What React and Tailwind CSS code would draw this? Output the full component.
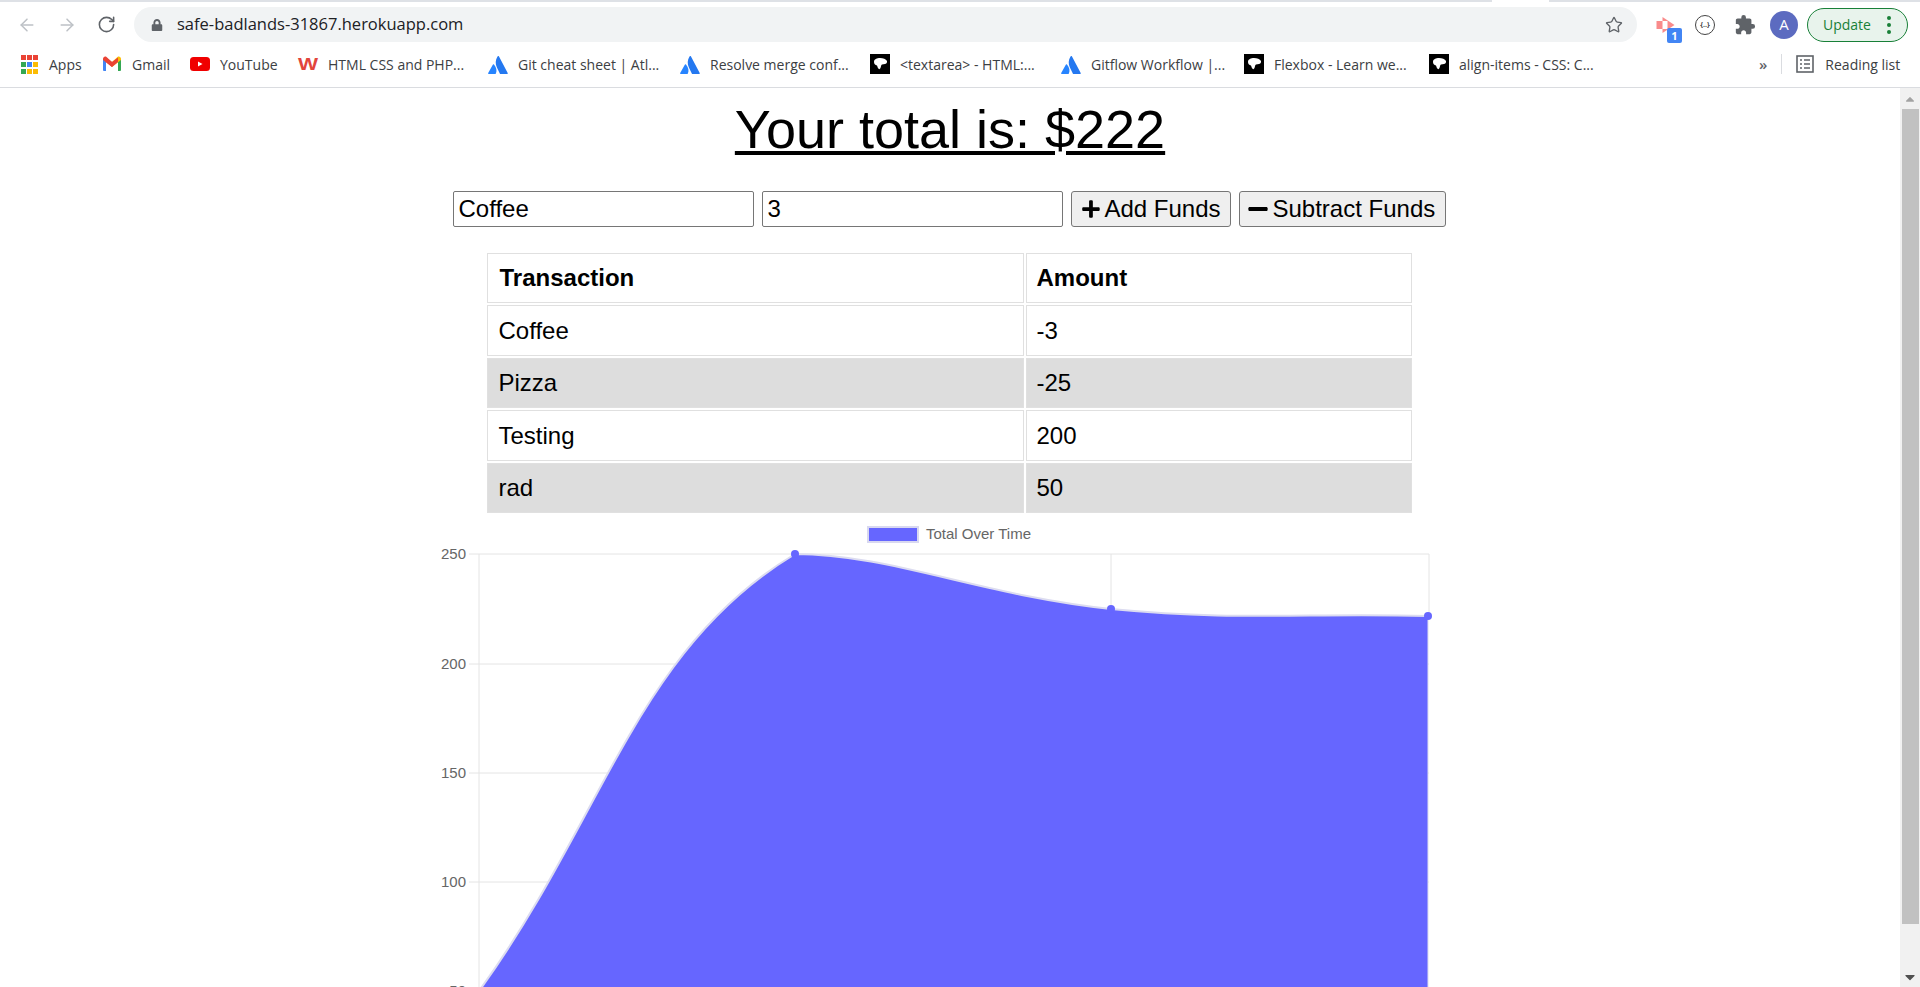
import { ArrowLeft, ArrowRight, RotateCw, Star } from "lucide-react";
import { FaLock, FaPlus, FaMinus, FaCaretUp, FaCaretDown } from "react-icons/fa";
import { MdExtension } from "react-icons/md";

function AppsIcon() {
  const colors = ["#ea4335", "#ea4335", "#ea4335", "#34a853", "#4285f4", "#fbbc04", "#34a853", "#fbbc04", "#fbbc04"];
  return (
    <div className="grid grid-cols-3 gap-[2px] w-[17px]">
      {colors.map((c, i) => (
        <svg key={i} width="5" height="5"><rect width="5" height="5" fill={c} /></svg>
      ))}
    </div>
  );
}

function GmailIcon() {
  return (
    <svg width="20" height="16" viewBox="0 0 20 16">
      <path d="M1 15V3l3 2v10H2a1 1 0 0 1-1-1z" fill="#4285f4" />
      <path d="M19 15V3l-3 2v10h2a1 1 0 0 0 1-1z" fill="#34a853" />
      <path d="M1 3c0-2 2-3 3.500-2L10 6v5L1 4z" fill="#ea4335" />
      <path d="M19 3c0-2-2-3-3.500-2L10 6v5l9-7z" fill="#fbbc04" />
      <path d="M4 1.500 10 6l6-4.500V6l-6 5-6-5z" fill="#ea4335" />
    </svg>
  );
}

function YoutubeIcon() {
  return (
    <svg width="20" height="14" viewBox="0 0 20 14">
      <rect width="20" height="14" rx="3.500" fill="#f00000" />
      <path d="M8 4.500v5L12.500 7z" fill="#fff" />
    </svg>
  );
}

function AtlassianIcon() {
  return (
    <svg width="20" height="19" viewBox="0 0 20 19">
      <path d="M6 9.500c-.4-.5-.9-.4-1.200.2L.2 18c-.2.500.1 1 .6 1h6.500c.3 0 .5-.1.600-.4 1.300-2.900.5-6.300-1.900-9.100z" fill="#2684ff" />
      <path d="M9.500 1.500c-2.200 3.700-2.300 7.600-.6 11l2.900 5.900c.1.300.4.600.7.600h6.600c.5 0 .8-.5.600-1L11 1.400c-.4-.7-1.200-.6-1.500.1z" fill="#2478f0" />
    </svg>
  );
}

function MdnIcon() {
  return (
    <svg width="20" height="20" viewBox="0 0 20 20">
      <rect width="20" height="20" fill="#000" />
      <path d="M4 8c0-3 3-4 6-4 3 0 6 1 7 3 .4 2-1 3-2 3l-3 .5c-1 .5-1 2-1.500 3.500-.5 1-1 1.500-1.500 1-1-.5-1.500-2-2-3.500C5 11 4 10 4 8z" fill="#fff" />
    </svg>
  );
}

function ReadingListIcon() {
  return (
    <svg width="18" height="18" viewBox="0 0 18 18" fill="none" stroke="#5f6368">
      <rect x="1" y="1" width="16" height="16" strokeWidth="1.600" />
      <path d="M4 5h2M8 5h6M4 9h2M8 9h6M4 13h2M8 13h6" strokeWidth="1.600" />
    </svg>
  );
}

const bookmarks = [
  { label: "Apps", icon: <AppsIcon />, width: "w-[83px]" },
  { label: "Gmail", icon: <GmailIcon />, width: "w-[88px]" },
  { label: "YouTube", icon: <YoutubeIcon />, width: "w-[108px]" },
  { label: "HTML CSS and PHP...", icon: <span className="font-['Liberation_Sans'] font-black text-[17px] leading-none text-[#e2453c] scale-x-125">W</span>, width: "w-[190px]" },
  { label: "Git cheat sheet | Atl...", icon: <AtlassianIcon />, width: "w-[192px]" },
  { label: "Resolve merge conf...", icon: <AtlassianIcon />, width: "w-[190px]" },
  { label: "<textarea> - HTML:...", icon: <MdnIcon />, width: "w-[191px]" },
  { label: "Gitflow Workflow |...", icon: <AtlassianIcon />, width: "w-[183px]" },
  { label: "Flexbox - Learn we...", icon: <MdnIcon />, width: "w-[185px]" },
  { label: "align-items - CSS: C...", icon: <MdnIcon />, width: "w-[190px]" },
];

function BrowserBar() {
  return (
    <div className="bg-white border-b border-[#dadce0] font-['Open_Sans',sans-serif]">
      <div className="flex h-[2px] bg-[#dee1e6]">
        <div className="w-[1492px]" />
        <div className="w-[57px] bg-white" />
      </div>
      <div className="flex items-center h-[45px] pl-[17px] pr-[11px]">
        <ArrowLeft size={20} strokeWidth={1.8} className="text-[#bdc1c6]" />
        <ArrowRight size={20} strokeWidth={1.8} className="text-[#bdc1c6] ml-[20px]" />
        <RotateCw size={19} strokeWidth={2} className="text-[#5f6368] ml-[20px]" />
        <div className="flex items-center w-[1503px] h-[35px] ml-[18px] pl-[17px] pr-[14px] rounded-full bg-[#f1f3f4]">
          <FaLock size={12} className="text-[#5f6368]" />
          <span className="ml-[14px] text-[16.500px] text-[#202124]">safe-badlands-31867.herokuapp.com</span>
          <Star size={18} strokeWidth={1.8} className="ml-auto text-[#5f6368]" />
        </div>
        <div className="relative ml-[18px] w-[27px] h-[34px]">
          <svg width="21" height="16" viewBox="0 0 18 16" className="mt-[9px]">
            <path d="M0 4h6V0l12 8-12 8v-4H0z" fill="#f98b8b" />
            <path d="M6 4h5v8H6z" fill="#fff" />
          </svg>
          <span className="absolute left-[12px] top-[20px] w-[15px] h-[15px] rounded-[2px] bg-[#4285f4] text-white text-[11px] font-bold leading-[15px] text-center">1</span>
        </div>
        <div className="ml-[13px] flex items-center justify-center w-[20px] h-[20px] rounded-full border-[1.500px] border-[#444] text-[7px] font-bold text-[#444] leading-none">
          {"{..}"}
        </div>
        <MdExtension size={22} className="ml-[19px] mr-[-2px] text-[#5f6368]" />
        <div className="ml-[16px] flex items-center justify-center w-[28px] h-[28px] rounded-full bg-[#5c6bc0] text-white text-[15px]">A</div>
        <div className="ml-[9px] flex items-center w-[101px] h-[34px] pl-[15px] rounded-full border border-[#188038] bg-[#e8f3ec] text-[#188038] text-[14px]">
          Update
          <div className="flex flex-col gap-[3px] ml-[16px]">
            <div className="w-[4px] h-[4px] rounded-full bg-[#188038]" />
            <div className="w-[4px] h-[4px] rounded-full bg-[#188038]" />
            <div className="w-[4px] h-[4px] rounded-full bg-[#188038]" />
          </div>
        </div>
      </div>
      <div className="flex items-center h-[40px] pb-[6px] pl-[19px] text-[14px] text-[#3c4043] whitespace-nowrap">
        {bookmarks.map((b) => (
          <div key={b.label} className={`flex items-center gap-[10px] ${b.width}`}>
            <div className="flex items-center justify-center w-[20px]">{b.icon}</div>
            <span>{b.label}</span>
          </div>
        ))}
        <span className="ml-[140px] text-[15px] font-semibold text-[#5f6368]">»</span>
        <div className="ml-[14px] w-px h-[20px] bg-[#dadce0]" />
        <div className="ml-[14px]"><ReadingListIcon /></div>
        <span className="ml-[11px]">Reading list</span>
      </div>
    </div>
  );
}

const rows = [
  { name: "Coffee", amount: "-3", height: "h-[51px]", bg: "" },
  { name: "Pizza", amount: "-25", height: "h-[50px]", bg: "bg-[#dddddd] border-[#dddddd]" },
  { name: "Testing", amount: "200", height: "h-[51px]", bg: "" },
  { name: "rad", amount: "50", height: "h-[50px]", bg: "bg-[#dddddd] border-[#dddddd]" },
];

function Chart() {
  const grid = [554, 664, 773, 882, 991];
  const labels = ["250", "200", "150", "100", "50"];
  const curve =
    "M479 991C605 817 636 650 795 554C889 554 984 596 1111 609C1237 621 1301 613 1428 616";
  return (
    <svg viewBox="430 518 1040 500" width="1040" height="500" className="block mx-auto mt-[3px] shrink-0 font-['Liberation_Sans',sans-serif]">
      {grid.map((y, i) => (
        <g key={y}>
          <path d={`M469 ${y}H1429`} stroke="#e4e4e4" />
          <text x="466" y={y + 5} textAnchor="end" fontSize="15" fill="#666">{labels[i]}</text>
        </g>
      ))}
      <path d="M479 554V1018M1111 554V620M1429 554V620" stroke="#e4e4e4" />
      <path d={`${curve}V1018H479Z`} fill="#6666ff" />
      <path d={curve} fill="none" stroke="#dcdcf0" strokeWidth="2" />
      <path d="M1428 616V1018" stroke="#dcdcf0" strokeWidth="1" />
      <circle cx="795" cy="554" r="4" fill="#6666ff" />
      <circle cx="1111" cy="609" r="4" fill="#6666ff" />
      <circle cx="1428" cy="616" r="4" fill="#6666ff" />
      <rect x="868" y="527" width="50" height="15" fill="#6666ff" stroke="#d8d8f0" strokeWidth="2" />
      <text x="926" y="539" fontSize="15" fill="#666">Total Over Time</text>
    </svg>
  );
}

export default function App() {
  return (
    <div className="flex flex-col h-screen overflow-hidden bg-white">
      <BrowserBar />
      <div className="flex flex-1 min-h-0">
        <div className="flex-1 min-w-0 overflow-hidden font-['Liberation_Sans',Arial,sans-serif] text-black">
          <h1 className="mt-[11px] text-center text-[54px] leading-[61px] underline decoration-[4px] underline-offset-[3px]">
            Your total is: $222
          </h1>
          <form className="flex justify-center gap-[8px] mt-[31px] -translate-x-[1px] text-[24px] whitespace-nowrap">
            <input readOnly value="Coffee" className="w-[301px] h-[36px] px-[5px] border border-[#767676] rounded-[2px]" />
            <input readOnly value="3" className="w-[301px] h-[36px] px-[5px] border border-[#767676] rounded-[2px]" />
            <button type="button" className="flex items-center gap-[4px] w-[160px] h-[36px] px-[9px] bg-[#efefef] border border-[#767676] rounded-[3px]">
              <FaPlus size={20} /> Add Funds
            </button>
            <button type="button" className="flex items-center gap-[4px] w-[207px] h-[36px] px-[7px] bg-[#efefef] border border-[#767676] rounded-[3px]">
              <FaMinus size={22} /> Subtract Funds
            </button>
          </form>
          <table className="mx-auto -translate-x-[1px] mt-[24px] w-[929px] table-fixed border-separate border-spacing-[2px] text-[24px] text-left">
            <thead>
              <tr className="h-[50px]">
                <th className="w-[537px] px-[12px] py-0 border border-[#e0e0e0]">Transaction</th>
                <th className="px-[10px] py-0 border border-[#e0e0e0]">Amount</th>
              </tr>
            </thead>
            <tbody>
              {rows.map((r) => (
                <tr key={r.name} className={r.height}>
                  <td className={`px-[11px] py-0 border border-[#e0e0e0] ${r.bg}`}>{r.name}</td>
                  <td className={`px-[10px] py-0 border border-[#e0e0e0] ${r.bg}`}>{r.amount}</td>
                </tr>
              ))}
            </tbody>
          </table>
          <Chart />
        </div>
        <div className="flex flex-col items-center w-[20px] bg-[#f1f1f1]">
          <FaCaretUp size={14} className="mt-[4px] text-[#a3a3a3]" />
          <div className="mt-[3px] w-[17px] h-[815px] bg-[#c1c1c1]" />
          <FaCaretDown size={16} className="mt-auto mb-[2px] text-[#505050]" />
        </div>
      </div>
    </div>
  );
}
